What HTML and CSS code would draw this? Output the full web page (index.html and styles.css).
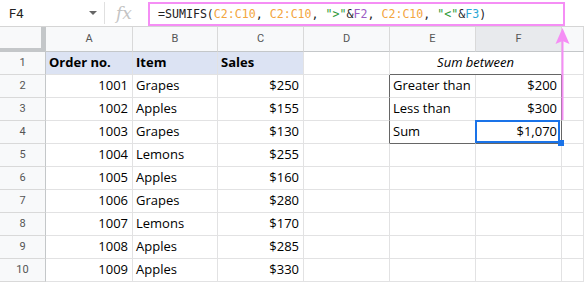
FILE: index.html
```html
<!doctype html>
<html lang="en">

<head>
    <meta charset="utf-8">
    <title>SUMIFS between</title>
    <link rel="stylesheet" href="styles.css">
</head>

<body>
    <div class="bar">
        <div class="namebox">
            <span>F4</span>
            <span class="caret"></span>
        </div>
        <div class="bar-sep"></div>
        <div class="fx">fx</div>
        <div class="formula">=SUMIFS(<span class="f-rng">C2:C10</span>, <span class="f-rng">C2:C10</span>, <span class="f-str">"&gt;"</span>&amp;<span class="f-f2">F2</span>, <span class="f-rng">C2:C10</span>, <span class="f-str">"&lt;"</span>&amp;<span class="f-f3">F3</span>)</div>
    </div>

    <div class="sheet">
        <!-- column headers -->
        <div class="corner"></div>
        <div class="col-h">A</div>
        <div class="col-h">B</div>
        <div class="col-h">C</div>
        <div class="col-h">D</div>
        <div class="col-h">E</div>
        <div class="col-h col-h-sel">F</div>
        <div class="col-h"></div>

        <!-- row 1 -->
        <div class="row-h">1</div>
        <div class="cell head">Order no.</div>
        <div class="cell head">Item</div>
        <div class="cell head">Sales</div>
        <div class="cell"></div>
        <div class="cell merged box-top"><i>Sum between</i></div>
        <div class="cell"></div>

        <!-- row 2 -->
        <div class="row-h">2</div>
        <div class="cell num">1001</div>
        <div class="cell">Grapes</div>
        <div class="cell num">$250</div>
        <div class="cell box-left"></div>
        <div class="cell">Greater than</div>
        <div class="cell num box-right">$200</div>
        <div class="cell"></div>

        <!-- row 3 -->
        <div class="row-h">3</div>
        <div class="cell num">1002</div>
        <div class="cell">Apples</div>
        <div class="cell num">$155</div>
        <div class="cell box-left"></div>
        <div class="cell">Less than</div>
        <div class="cell num box-right">$300</div>
        <div class="cell"></div>

        <!-- row 4 -->
        <div class="row-h row-h-sel">4</div>
        <div class="cell num">1003</div>
        <div class="cell">Grapes</div>
        <div class="cell num">$130</div>
        <div class="cell box-left"></div>
        <div class="cell box-bottom">Sum</div>
        <div class="cell num box-right box-bottom selected">$1,070</div>
        <div class="cell"></div>

        <!-- rows 5-10 -->
        <div class="row-h">5</div>
        <div class="cell num">1004</div>
        <div class="cell">Lemons</div>
        <div class="cell num">$255</div>
        <div class="cell"></div>
        <div class="cell"></div>
        <div class="cell"></div>
        <div class="cell"></div>

        <div class="row-h">6</div>
        <div class="cell num">1005</div>
        <div class="cell">Apples</div>
        <div class="cell num">$160</div>
        <div class="cell"></div>
        <div class="cell"></div>
        <div class="cell"></div>
        <div class="cell"></div>

        <div class="row-h">7</div>
        <div class="cell num">1006</div>
        <div class="cell">Grapes</div>
        <div class="cell num">$280</div>
        <div class="cell"></div>
        <div class="cell"></div>
        <div class="cell"></div>
        <div class="cell"></div>

        <div class="row-h">8</div>
        <div class="cell num">1007</div>
        <div class="cell">Lemons</div>
        <div class="cell num">$170</div>
        <div class="cell"></div>
        <div class="cell"></div>
        <div class="cell"></div>
        <div class="cell"></div>

        <div class="row-h">9</div>
        <div class="cell num">1008</div>
        <div class="cell">Apples</div>
        <div class="cell num">$285</div>
        <div class="cell"></div>
        <div class="cell"></div>
        <div class="cell"></div>
        <div class="cell"></div>

        <div class="row-h">10</div>
        <div class="cell num">1009</div>
        <div class="cell">Apples</div>
        <div class="cell num">$330</div>
        <div class="cell"></div>
        <div class="cell"></div>
        <div class="cell"></div>
        <div class="cell"></div>

        <!-- pink arrow pointing at the formula bar -->
        <svg class="arrow" width="16" height="94" viewBox="0 0 16 94">
            <line x1="7.5" y1="10" x2="7.5" y2="93" stroke="#f58ef5" stroke-width="2" />
            <path d="M7.5 1 L14.5 17 L7.5 14 L0.5 17 Z" fill="#f58ef5" />
        </svg>
    </div>
</body>

</html>
```

FILE: styles.css
```css
* {
    box-sizing: border-box;
}

html,
body {
    margin: 0;
    background-color: #fff;
    color: #000;
    font-family: "Open Sans", "Noto Sans", sans-serif;
    font-size: 13px;
    overflow: hidden;
}

/* formula bar */
.bar {
    display: flex;
    align-items: center;
    height: 27px;
    border-bottom: 1px solid #d5d5d5;
}

.namebox {
    display: flex;
    align-items: center;
    justify-content: space-between;
    width: 104px;
    padding: 0 7px 0 9px;
    font-family: Roboto, "Liberation Sans", sans-serif;
    font-size: 13px;
    color: #222;
}

.caret {
    width: 0;
    height: 0;
    border-left: 4px solid transparent;
    border-right: 4px solid transparent;
    border-top: 4px solid #666;
}

.bar-sep {
    width: 1px;
    height: 22px;
    background-color: #e0e0e0;
}

.fx {
    width: 43px;
    padding-left: 11px;
    font-family: "DejaVu Serif", serif;
    font-style: italic;
    font-size: 17px;
    color: #c4c4c4;
    line-height: 20px;
}

.formula {
    width: 417px;
    height: 24px;
    margin-top: 2px;
    padding-left: 8px;
    border: 2px solid #f58ef5;
    font-family: "DejaVu Sans Mono", monospace;
    font-size: 11.6px;
    line-height: 20px;
    color: #222;
    white-space: nowrap;
}

.f-rng {
    color: #f3a540;
}

.f-str {
    color: #2f9a3a;
}

.f-f2 {
    color: #9c5cc4;
}

.f-f3 {
    color: #2aa7d6;
}

/* grid */
.sheet {
    position: relative;
    display: grid;
    grid-template-columns: 46px 87px 85px 86px 86px 86px 86px 22px;
    grid-template-rows: 25px repeat(10, 23px);
}

.corner {
    background-color: #f8f9fa;
    border-right: 5px solid #c4c7c9;
    border-bottom: 4px solid #c4c7c9;
}

.col-h {
    background-color: #f8f9fa;
    border-right: 1px solid #d9d9d9;
    border-bottom: 1px solid #c4c7c9;
    text-align: center;
    font-family: Roboto, "Liberation Sans", sans-serif;
    font-size: 11px;
    line-height: 24px;
    color: #555;
}

.col-h-sel,
.row-h-sel {
    background-color: #e8eaed;
}

.row-h {
    background-color: #f8f9fa;
    border-right: 1px solid #c4c7c9;
    border-bottom: 1px solid #d9d9d9;
    text-align: center;
    font-family: Roboto, "Liberation Sans", sans-serif;
    font-size: 11px;
    line-height: 22px;
    color: #555;
}

.cell {
    border-right: 1px solid #e2e2e3;
    border-bottom: 1px solid #e2e2e3;
    padding: 0 3px;
    line-height: 21px;
    white-space: nowrap;
    overflow: hidden;
}

.num {
    text-align: right;
    padding-right: 4px;
}

.head {
    background-color: #dce3f3;
    font-weight: bold;
}

.merged {
    grid-column: span 2;
    text-align: center;
}

/* E2:F4 bordered range */
.box-top {
    border-bottom-color: #666;
}

.box-left {
    border-right-color: #666;
}

.box-right {
    border-right-color: #666;
}

.box-bottom {
    border-bottom-color: #666;
}

.selected {
    position: relative;
    overflow: visible;
}

.selected::after {
    content: "";
    position: absolute;
    left: -1px;
    top: -1px;
    right: 1px;
    bottom: 0;
    border: 2px solid #1a73e8;
}

.selected::before {
    content: "";
    position: absolute;
    right: -3px;
    bottom: -3px;
    width: 6px;
    height: 6px;
    background-color: #1a73e8;
    z-index: 1;
}

.arrow {
    position: absolute;
    left: 555px;
    top: 0;
}
```
